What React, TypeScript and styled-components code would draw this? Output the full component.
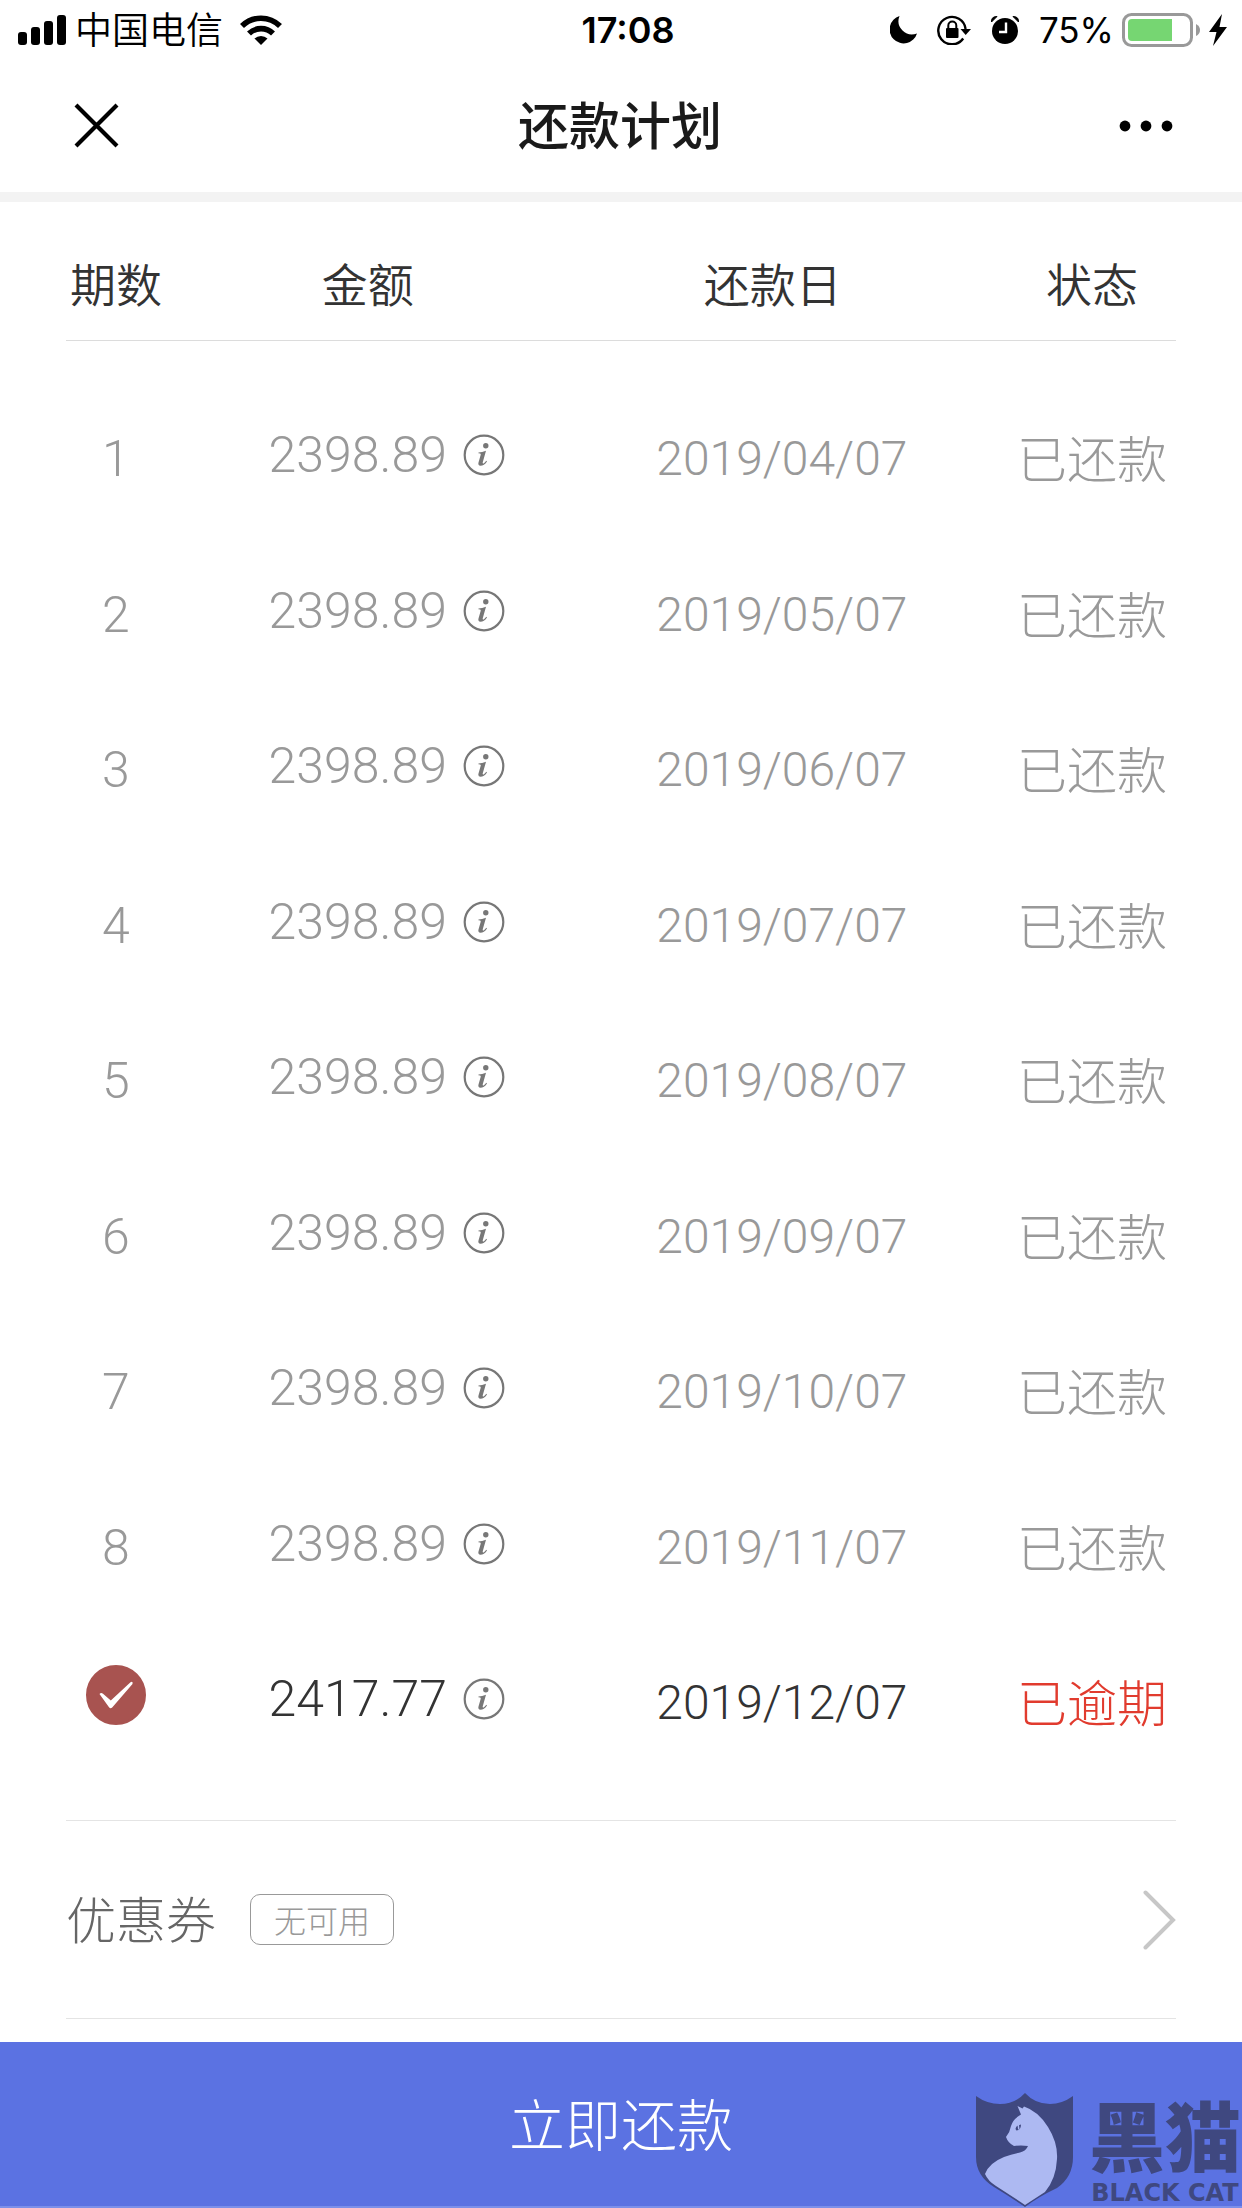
import React, { useState } from "react";
import styled, { createGlobalStyle } from "styled-components";

const GlobalStyle = createGlobalStyle`
  *, *::before, *::after { box-sizing: border-box; }
  body {
    margin: 0;
    background: #fff;
    color: #333;
    font-family: "Liberation Sans", "Noto Sans CJK SC", sans-serif;
  }
  button {
    margin: 0;
    padding: 0;
    border: 0;
    background: none;
    color: inherit;
    font: inherit;
    cursor: pointer;
  }
  svg { display: block; flex: none; }
`;

const cjk = `"Noto Sans CJK SC", sans-serif`;

const Page = styled.div`
  display: flex;
  flex-direction: column;
  min-height: 100vh;
`;

const StatusBar = styled.div`
  display: grid;
  grid-template-columns: 1fr auto 1fr;
  align-items: center;
  height: 60px;
  padding: 0 4px 0 18px;
  color: #000;
  font-family: Inter, ${cjk};
  font-size: 36px;
  line-height: 60px;
`;

const StatusGroup = styled.div<{ $end?: boolean }>`
  display: flex;
  align-items: center;
  justify-content: ${(p) => (p.$end ? "flex-end" : "flex-start")};
  padding-right: ${(p) => (p.$end ? "11px" : "0")};
`;

const Carrier = styled.span`
  padding: 0 17px 0 9px;
  font-family: ${cjk};
  font-weight: 350;
  line-height: 56px;
  padding-bottom: 4px;
  font-size: 37px;
`;

const Clock = styled.time`
  font-weight: 600;
`;

const Percent = styled.span`
  padding: 0 8px 0 20px;
  font-size: 35px;
`;

const StatusIcon = styled.svg`
  margin-left: 20px;
`;

const NavBar = styled.header`
  display: grid;
  grid-template-columns: 1fr auto 1fr;
  align-items: center;
  height: 142px;
  padding: 0 64px 0 62px;
  border-bottom: 10px solid #f3f3f3;
`;

const Title = styled.h1`
  margin: 0;
  padding-bottom: 6px;
  color: #1a1a1a;
  font-family: ${cjk};
  font-size: 51px;
  font-weight: 500;
  line-height: 72px;
`;

const NavButton = styled.button<{ $end?: boolean }>`
  justify-self: ${(p) => (p.$end ? "end" : "start")};
`;

const Content = styled.main`
  flex: 1;
  padding: 0 66px 23px;
`;

const Table = styled.table`
  display: block;
  border-bottom: 1px solid #e4e4e4;
`;

const Row = styled.tr`
  display: grid;
  grid-template-columns: 9fr 36fr 37fr 18fr;
  align-items: center;
`;

const Head = styled.thead`
  display: block;
  border-bottom: 1px solid #dcdcdc;

  ${Row} {
    height: 138px;
    padding-top: 22px;
  }
`;

const HeadCell = styled.th<{ $indent?: number }>`
  padding: 0 0 0 ${(p) => p.$indent ?? 0}px;
  font-family: ${cjk};
  font-size: 46px;
  font-weight: 350;
  line-height: 64px;
  white-space: nowrap;
`;

const Body = styled.tbody`
  display: block;
  padding: 40px 0 39px;

  ${Row} { height: 156px; }
  ${Row}:nth-child(even) { height: 155px; }
`;

type Tone = "paid" | "due" | "overdue";

const tones: Record<Tone, string> = {
  paid: "#999",
  due: "#333",
  overdue: "#e13b2e",
};

const Cell = styled.td<{ $tone: Tone; $indent?: number }>`
  display: flex;
  align-items: center;
  justify-content: center;
  padding: 0 0 0 ${(p) => p.$indent ?? 0}px;
  color: ${(p) => tones[p.$tone]};
  font-family: Roboto, ${cjk};
  font-size: 50px;
  font-weight: 300;
  line-height: 72px;
  white-space: nowrap;
`;

const AmountCell = styled(Cell)`
  gap: 16px;
  padding-bottom: 8px;
`;

const DateCell = styled(Cell)`
  font-size: 48px;
`;

const StatusCell = styled(Cell)`
  padding-top: 4px;
`;

const CheckLabel = styled.label`
  display: grid;
  margin-bottom: 16px;
  cursor: pointer;

  > * { grid-area: 1 / 1; }
`;

const CheckInput = styled.input`
  appearance: none;
  width: 60px;
  height: 60px;
  margin: 0;
  border: 2px solid #a85350;
  border-radius: 50%;

  &:checked { background: #a85350; }
`;

const Coupon = styled.button`
  display: flex;
  align-items: center;
  width: 100%;
  height: 198px;
  border-bottom: 1px solid #e4e4e4;
  color: #666;
  font-family: ${cjk};
  font-size: 50px;
  font-weight: 300;
  line-height: 72px;
`;

const CouponLabel = styled.span`
  padding-bottom: 6px;
`;

const Badge = styled.span`
  margin: 0 auto 0 34px;
  padding: 0 23px;
  border: 1px solid #999;
  border-radius: 10px;
  color: #999;
  font-size: 32px;
  line-height: 49px;
`;

const Footer = styled.footer`
  position: relative;
  border-bottom: 2px solid #7c8fea;
  background: #5b72e2;
`;

const PayButton = styled.button`
  width: 100%;
  height: 164px;
  padding-bottom: 4px;
  color: #fff;
  font-family: ${cjk};
  font-size: 56px;
  font-weight: 300;
  line-height: 80px;
`;

const Watermark = styled.div`
  position: absolute;
  right: 1px;
  bottom: -2px;
  display: flex;
  align-items: flex-end;
  gap: 15px;
  color: #3f4880;
  pointer-events: none;
`;

const WatermarkText = styled.div`
  display: flex;
  flex-direction: column;
  align-items: center;
  gap: 8px;
  padding-bottom: 2px;
`;

const WatermarkName = styled.span`
  font-family: ${cjk};
  font-size: 76px;
  font-weight: 900;
  line-height: 78px;
`;

const WatermarkLatin = styled.span`
  font-family: "DejaVu Sans", sans-serif;
  font-size: 24px;
  font-weight: 700;
  line-height: 26px;
  white-space: nowrap;
`;

const Signal = () => (
  <svg width="48" height="30" viewBox="0 0 48 30">
    <rect x="0" y="17" width="9" height="13" rx="3" />
    <rect x="13" y="12" width="9" height="18" rx="3" />
    <rect x="26" y="6" width="9" height="24" rx="3" />
    <rect x="39" y="0" width="9" height="30" rx="3" />
  </svg>
);

const Wifi = () => (
  <svg width="42" height="30" viewBox="0 0 42 30">
    <g fill="none" stroke="#000" strokeWidth="5.6">
      <path d="M2 11 A27 27 0 0 1 40 11" />
      <path d="M9 18.6 A17 17 0 0 1 33 18.6" />
    </g>
    <path d="M14.5 23.5 A9.5 9.5 0 0 1 27.500 23.500 L21 30 Z" />
  </svg>
);

const Moon = () => (
  <StatusIcon width="27" height="28" viewBox="0 0 27 28">
    <path d="M9.500 0 A14 14 0 1 0 27 17.500 A13.500 13.500 0 0 1 9.500 0 Z" />
  </StatusIcon>
);

const RotationLock = () => (
  <StatusIcon width="34" height="30" viewBox="0 0 34 30">
    <path d="M26.200 23.500 A13.700 13.700 0 1 1 28.600 14" fill="none" stroke="#000" strokeWidth="2.400" />
    <path d="M23.500 14 H34 L28.700 20 Z" />
    <rect x="9" y="13" width="12.500" height="10" rx="1" />
    <path d="M11.300 14 V10.500 A4 4 0 0 1 19.300 10.500 V14" fill="none" stroke="#000" strokeWidth="2" />
  </StatusIcon>
);

const Alarm = () => (
  <StatusIcon width="28" height="28" viewBox="0 0 28 28">
    <circle cx="14" cy="15" r="13" />
    <path d="M.5 6 Q0 .5 6 .5 Z M27.500 6 Q28 .5 22 .5 Z" stroke="#000" strokeWidth="1" />
    <path d="M15 6.500 V16 H8" fill="none" stroke="#fff" strokeWidth="2.400" />
  </StatusIcon>
);

const Battery = () => (
  <svg width="78" height="34" viewBox="0 0 78 34">
    <rect x="1.500" y="1.500" width="68" height="31" rx="8" fill="none" stroke="#999" strokeWidth="3" />
    <path d="M10 6 H50 V28 H10 Q6 28 6 24 V10 Q6 6 10 6 Z" fill="#76d672" />
    <path d="M74 11 Q78 13 78 17 Q78 21 74 23 Z" fill="#999" />
  </svg>
);

const Bolt = () => (
  <svg width="27" height="32" viewBox="-9 0 27 32">
    <path d="M13 0 L0 18 H7.500 L4 32 L18 13 H10.500 Z" />
  </svg>
);

const CloseIcon = () => (
  <svg width="62" height="54" viewBox="-8 0 62 54" stroke="#000" strokeWidth="4.200">
    <path d="M6 6 L47 47 M47 6 L6 47" />
  </svg>
);

const MoreIcon = () => (
  <svg width="60" height="54" viewBox="0 0 60 54">
    <circle cx="7" cy="27" r="5.400" />
    <circle cx="28" cy="27" r="5.400" />
    <circle cx="49" cy="27" r="5.400" />
  </svg>
);

const InfoIcon = () => (
  <svg width="42" height="42" viewBox="0 0 42 42">
    <circle cx="21" cy="21" r="19.300" fill="none" stroke="#777" strokeWidth="2.200" />
    <circle cx="22.800" cy="11.800" r="2.700" fill="#777" />
    <path
      d="M15.500 18.500 Q19 18.300 23 16.800 L19.700 28.500 Q19.500 30 21 29.200 Q22.300 28.200 23.300 26.800 L24 27.400 Q21 31.800 17.500 31.800 Q14.700 31.500 15.500 28.500 L17.800 20.500 Q18 19.300 15.400 19.300 Z"
      fill="#777"
    />
  </svg>
);

const CheckMark = () => (
  <svg width="60" height="60" viewBox="0 0 60 60">
    <path
      d="M13.500 29 Q15 27.200 17 28.700 L24.800 35.500 L44.500 17.200 Q47.200 15.800 46.500 19 L26.200 42.500 Q24.500 44.200 23 42.300 Z"
      fill="#fff"
    />
  </svg>
);

const Chevron = () => (
  <svg width="33" height="60" viewBox="0 0 33 60">
    <path d="M2.500 2.500 L30 30 L2.500 57.500" fill="none" stroke="#c7c7c7" strokeWidth="4" strokeLinecap="round" />
  </svg>
);

const CatShield = () => (
  <svg width="98" height="115" viewBox="0 0 98 115">
    <path
      d="M0 3 Q11 11 24 11 Q39 11 49 0 Q59 11 74 11 Q86 11 97 3 V64 Q97 84 81 95 Q62 104 49 114 Q36 105 18 94 Q0 83 0 64 Z"
      fill="#3f4880"
    />
    <path
      d="M41.500 13 L46.500 15.500 L48 13.500 Q62 18 72 34 Q82 50 81 66 Q80 86 69 99 L49 112 Q34 102 20 93 Q12 88 9 81 Q13 70 28 64 Q36 61 44 59.500 Q50 58 52 53 Q45 52 38 53 Q32 50 30 44 Q34 39 35 33 Q37 26 45 21.500 Z"
      fill="#adb9f2"
    />
    <path d="M39.500 36 Q40 32 45 31.500 Q45 37 40.500 37.500 Z" fill="#3f4880" />
    <path d="M42.300 32 L42.800 36.500" stroke="#adb9f2" strokeWidth="1.500" />
  </svg>
);

const installments = [
  { no: 1, amount: "2398.89", date: "2019/04/07" },
  { no: 2, amount: "2398.89", date: "2019/05/07" },
  { no: 3, amount: "2398.89", date: "2019/06/07" },
  { no: 4, amount: "2398.89", date: "2019/07/07" },
  { no: 5, amount: "2398.89", date: "2019/08/07" },
  { no: 6, amount: "2398.89", date: "2019/09/07" },
  { no: 7, amount: "2398.89", date: "2019/10/07" },
  { no: 8, amount: "2398.89", date: "2019/11/07" },
  { no: 9, amount: "2417.77", date: "2019/12/07", overdue: true },
];

export default function App() {
  const [checked, setChecked] = useState(true);

  return (
    <Page>
      <GlobalStyle />
      <StatusBar>
        <StatusGroup>
          <Signal />
          <Carrier>中国电信</Carrier>
          <Wifi />
        </StatusGroup>
        <Clock>17:08</Clock>
        <StatusGroup $end>
          <Moon />
          <RotationLock />
          <Alarm />
          <Percent>75%</Percent>
          <Battery />
          <Bolt />
        </StatusGroup>
      </StatusBar>

      <NavBar>
        <NavButton aria-label="关闭"><CloseIcon /></NavButton>
        <Title>还款计划</Title>
        <NavButton $end aria-label="更多"><MoreIcon /></NavButton>
      </NavBar>

      <Content>
        <Table>
          <Head>
            <Row>
              <HeadCell scope="col">期数</HeadCell>
              <HeadCell scope="col" $indent={4}>金额</HeadCell>
              <HeadCell scope="col" $indent={4}>还款日</HeadCell>
              <HeadCell scope="col" $indent={32}>状态</HeadCell>
            </Row>
          </Head>
          <Body>
            {installments.map(({ no, amount, date, overdue }) => {
              const tone: Tone = overdue ? "due" : "paid";
              return (
                <Row key={no}>
                  <Cell $tone={tone}>
                    {overdue ? (
                      <CheckLabel>
                        <CheckInput
                          type="checkbox"
                          aria-label={`第${no}期`}
                          checked={checked}
                          onChange={(e) => setChecked(e.target.checked)}
                        />
                        <CheckMark />
                      </CheckLabel>
                    ) : (
                      no
                    )}
                  </Cell>
                  <AmountCell $tone={tone} $indent={42}>
                    {amount}
                    <button aria-label="明细"><InfoIcon /></button>
                  </AmountCell>
                  <DateCell $tone={tone} $indent={22}>{date}</DateCell>
                  <StatusCell $tone={overdue ? "overdue" : "paid"} $indent={32}>
                    {overdue ? "已逾期" : "已还款"}
                  </StatusCell>
                </Row>
              );
            })}
          </Body>
        </Table>

        <Coupon>
          <CouponLabel>优惠券</CouponLabel>
          <Badge>无可用</Badge>
          <Chevron />
        </Coupon>
      </Content>

      <Footer>
        <PayButton>立即还款</PayButton>
        <Watermark>
          <CatShield />
          <WatermarkText>
            <WatermarkName>黑猫</WatermarkName>
            <WatermarkLatin>BLACK CAT</WatermarkLatin>
          </WatermarkText>
        </Watermark>
      </Footer>
    </Page>
  );
}
